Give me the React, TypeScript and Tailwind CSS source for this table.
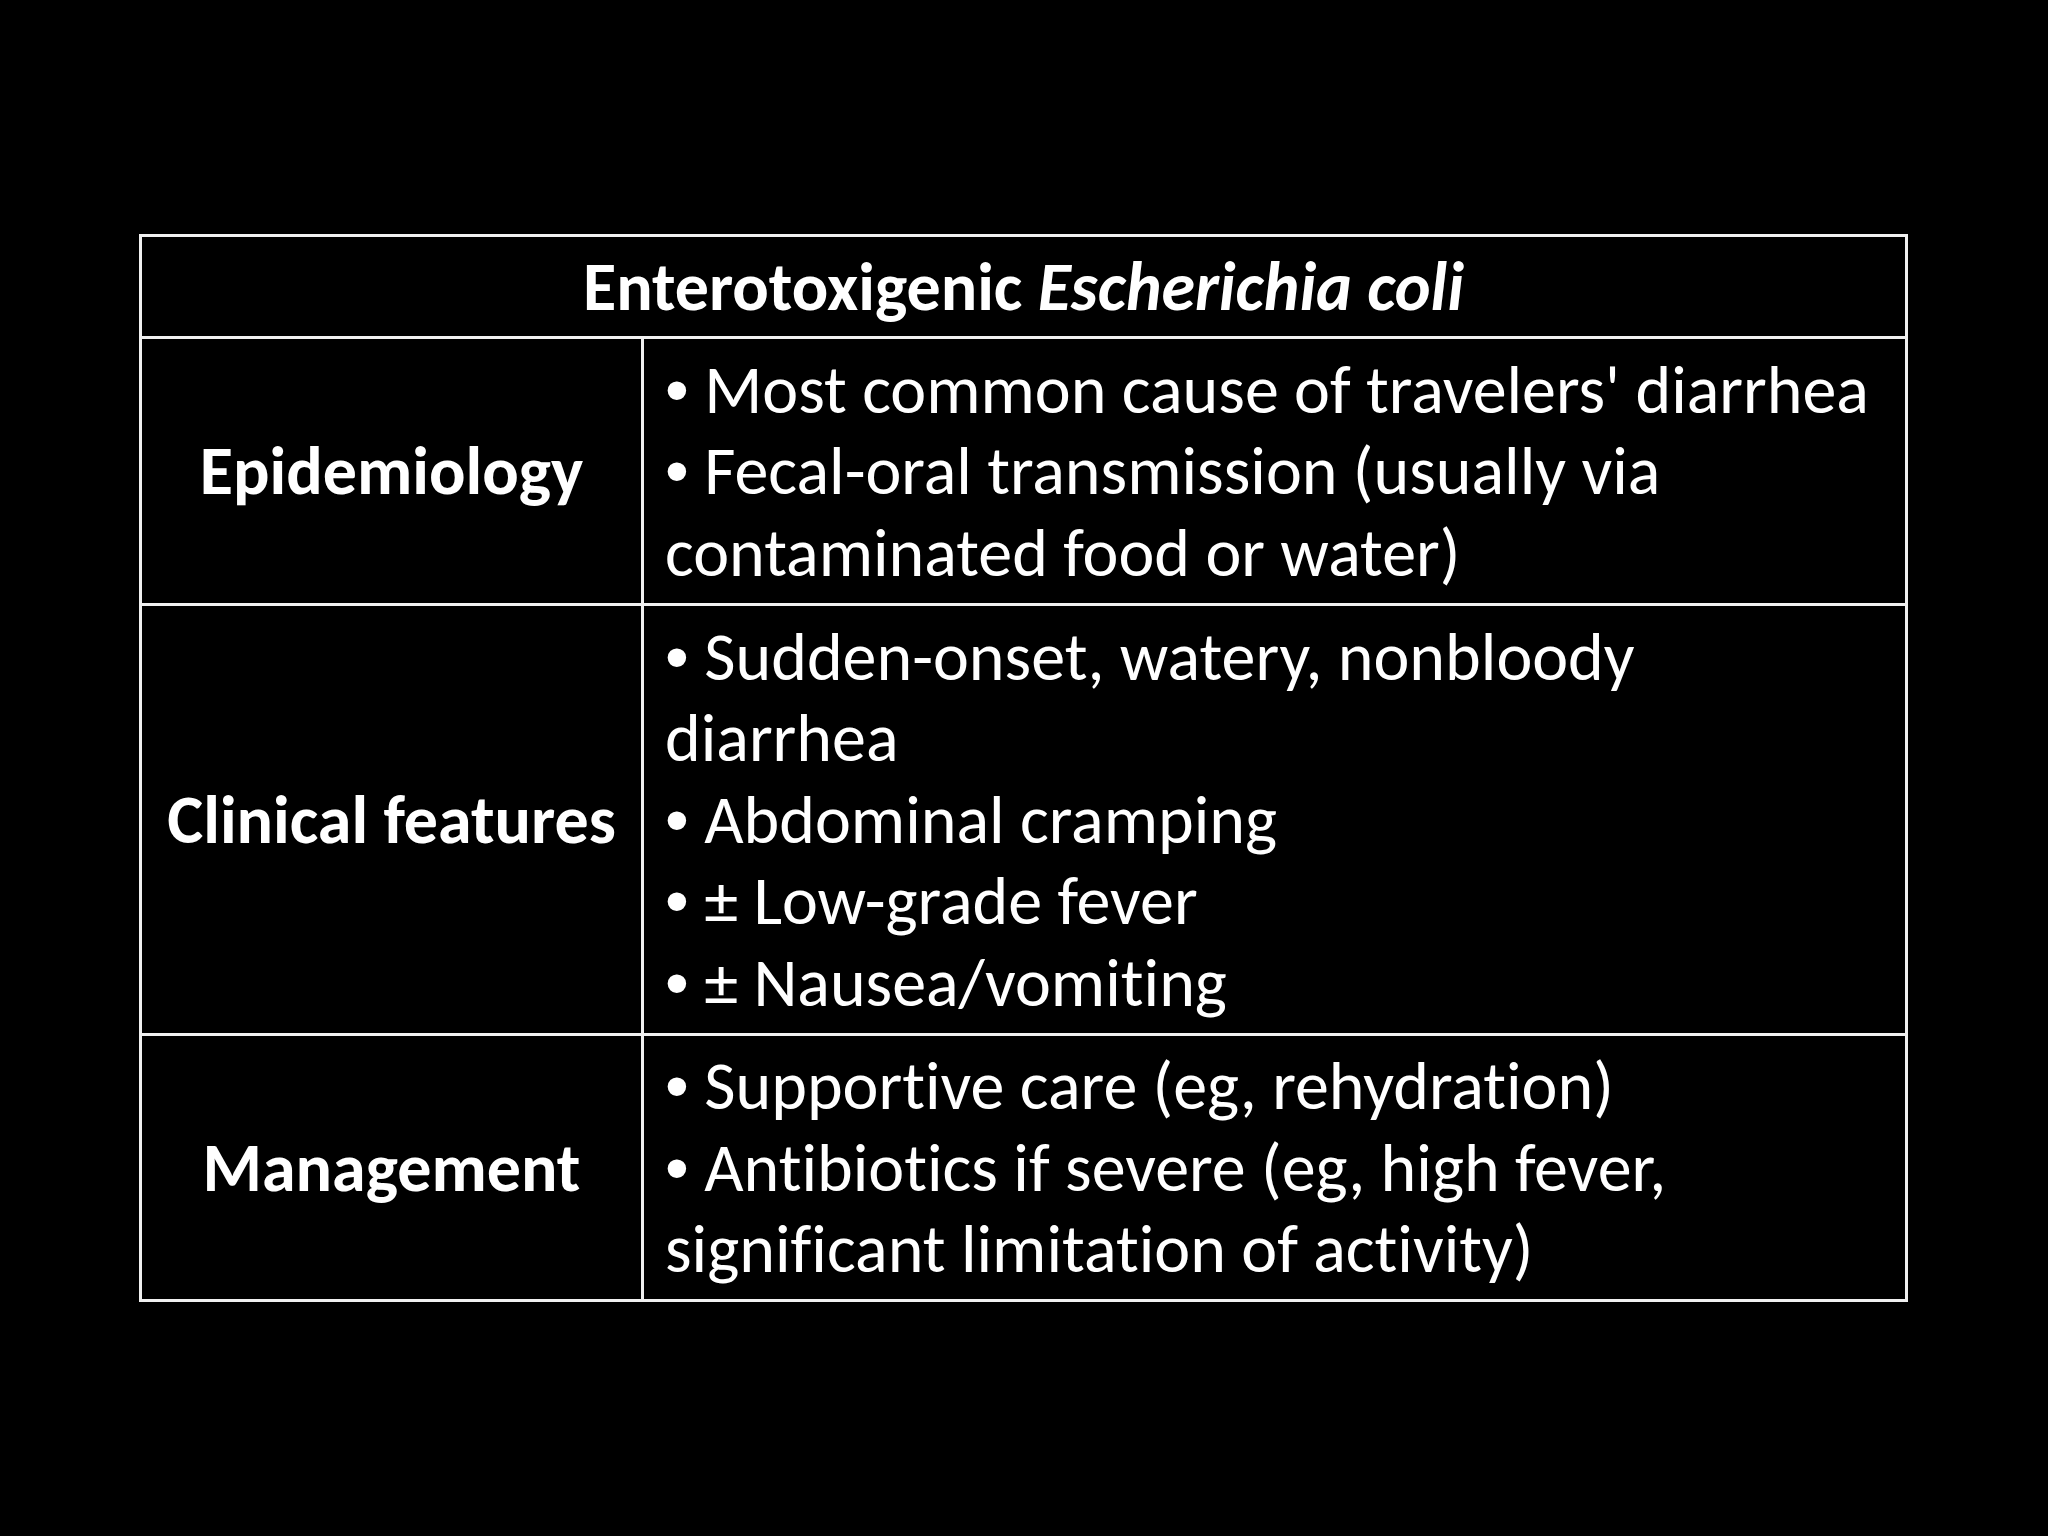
import React from "react";

type Line = { text: string; bullet?: boolean };
type Row = { label: string; h: string; lines: Line[]; last?: boolean };

const rows: Row[] = [
  {
    label: "Epidemiology",
    h: "h-[267px]",
    lines: [
      { text: "Most common cause of travelers' diarrhea", bullet: true },
      { text: "Fecal-oral transmission (usually via", bullet: true },
      { text: "contaminated food or water)" },
    ],
  },
  {
    label: "Clinical features",
    h: "h-[430px]",
    lines: [
      { text: "Sudden-onset, watery, nonbloody", bullet: true },
      { text: "diarrhea" },
      { text: "Abdominal cramping", bullet: true },
      { text: "± Low-grade fever", bullet: true },
      { text: "± Nausea/vomiting", bullet: true },
    ],
  },
  {
    label: "Management",
    h: "h-[263px]",
    last: true,
    lines: [
      { text: "Supportive care (eg, rehydration)", bullet: true },
      { text: "Antibiotics if severe (eg, high fever,", bullet: true },
      { text: "significant limitation of activity)" },
    ],
  },
];

export default function App() {
  return (
    <div
      className="bg-black text-white w-[2048px] h-[1536px] pt-[234px] pl-[139px] text-[68px] leading-[1.2] [font-variant-ligatures:none]"
      style={{ fontFamily: "Carlito, 'Liberation Sans', sans-serif" }}
    >
      <div className="w-[1769px] border-[3px] border-[#f0f0f0] flex flex-col">
        <div className="h-[102px] border-b-[3px] border-[#f0f0f0] flex items-center justify-center font-bold">
          <span>
            Enterotoxigenic <i>Escherichia coli</i>
          </span>
        </div>
        {rows.map((r) => (
          <div
            key={r.label}
            className={`flex ${r.h} ${r.last ? "" : "border-b-[3px] border-[#f0f0f0]"}`}
          >
            <div className="w-[502px] shrink-0 border-r-[3px] border-[#f0f0f0] flex items-center justify-center font-bold">
              {r.label}
            </div>
            <div className="flex-1 flex flex-col justify-center pl-[21px] pr-[20px]">
              {r.lines.map((l, i) => (
                <div key={i} className="whitespace-nowrap">
                  {l.bullet ? (
                    <>
                      <span className="font-['Liberation_Sans']">•</span>{" "}
                    </>
                  ) : null}
                  {l.text}
                </div>
              ))}
            </div>
          </div>
        ))}
      </div>
    </div>
  );
}
